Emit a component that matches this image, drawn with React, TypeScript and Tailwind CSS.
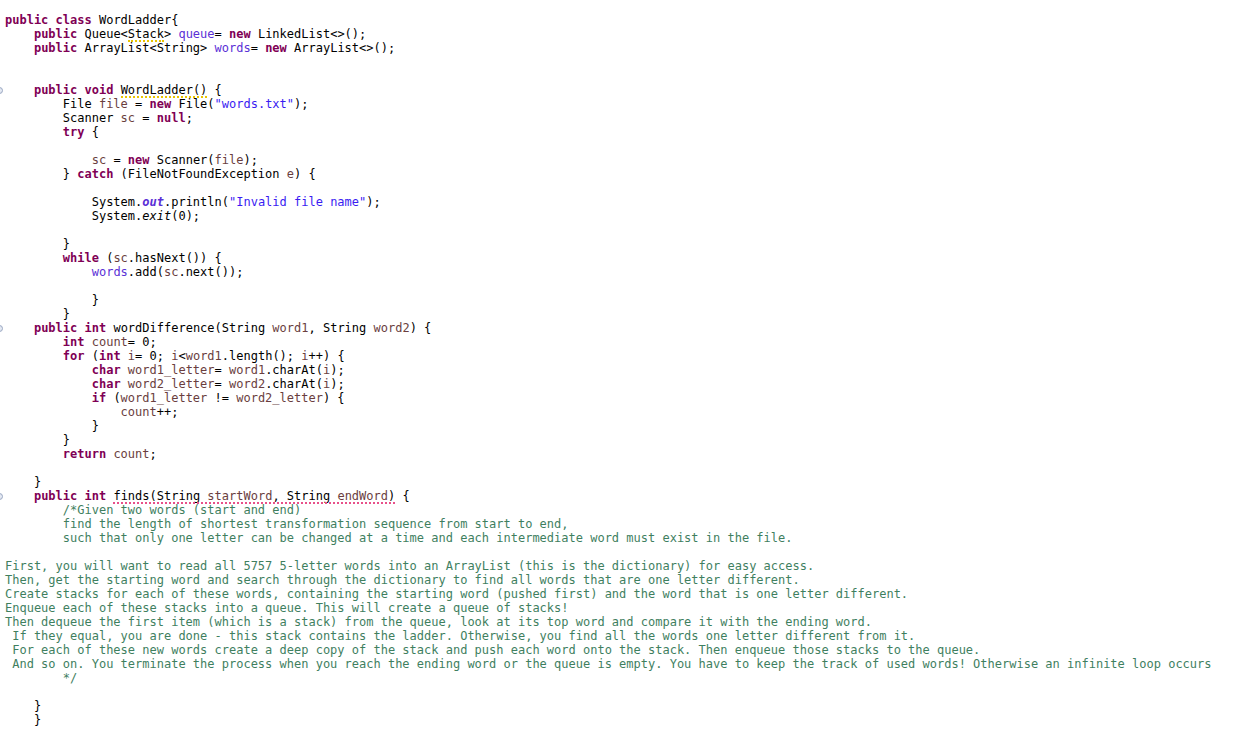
import React, {JSX} from 'react';

type Seg = [string, string?];

const K = "font-bold text-[#7f0055]";
const F = "text-[#5b30d6]";
const S = "text-[#3a1cf2]";
const V = "text-[#6a3e3e]";
const C = "text-[#3f7f5f]";
const SF = "font-bold italic text-[#5b30d6]";
const SM = "italic";

const T1 = "    ";
const T2 = "        ";
const T3 = "            ";
const T4 = "                ";

interface CodeLine {
    segs: Seg[];
    marker?: boolean;
}

function Warn({children, error}: {children: React.ReactNode; error?: boolean}): JSX.Element {
    return (
        <span className="relative">
            {children}
            <span
                className={`absolute left-0 right-0 bottom-[-1px] h-[2px] border-b-2 border-dotted ${error ? "border-[#e8508a]" : "border-[#e9c400]"}`}/>
        </span>
    );
}

const lines: CodeLine[] = [
    {segs: [["public", K], [" "], ["class", K], [" WordLadder{"]]},
    {segs: [[T1], ["public", K], [" Queue<"], ["@warn:Stack"], ["> "], ["queue", F], ["= "], ["new", K], [" LinkedList<>();"]]},
    {segs: [[T1], ["public", K], [" ArrayList<String> "], ["words", F], ["= "], ["new", K], [" ArrayList<>();"]]},
    {segs: []},
    {segs: []},
    {marker: true, segs: [[T1], ["public", K], [" "], ["void", K], [" "], ["@warn:WordLadder()"], [" {"]]},
    {segs: [[T2 + "File "], ["file", V], [" = "], ["new", K], [" File("], ["\"words.txt\"", S], [");"]]},
    {segs: [[T2 + "Scanner "], ["sc", V], [" = "], ["null", K], [";"]]},
    {segs: [[T2], ["try", K], [" {"]]},
    {segs: []},
    {segs: [[T3], ["sc", V], [" = "], ["new", K], [" Scanner("], ["file", V], [");"]]},
    {segs: [[T2 + "} "], ["catch", K], [" (FileNotFoundException "], ["e", V], [") {"]]},
    {segs: []},
    {segs: [[T3 + "System."], ["out", SF], [".println("], ["\"Invalid file name\"", S], [");"]]},
    {segs: [[T3 + "System."], ["exit", SM], ["(0);"]]},
    {segs: []},
    {segs: [[T2 + "}"]]},
    {segs: [[T2], ["while", K], [" ("], ["sc", V], [".hasNext()) {"]]},
    {segs: [[T3], ["words", F], [".add("], ["sc", V], [".next());"]]},
    {segs: []},
    {segs: [[T3 + "}"]]},
    {segs: [[T2 + "}"]]},
    {marker: true, segs: [[T1], ["public", K], [" "], ["int", K], [" wordDifference(String "], ["word1", V], [", String "], ["word2", V], [") {"]]},
    {segs: [[T2], ["int", K], [" "], ["count", V], ["= 0;"]]},
    {segs: [[T2], ["for", K], [" ("], ["int", K], [" "], ["i", V], ["= 0; "], ["i", V], ["<"], ["word1", V], [".length(); "], ["i", V], ["++) {"]]},
    {segs: [[T3], ["char", K], [" "], ["word1_letter", V], ["= "], ["word1", V], [".charAt("], ["i", V], [");"]]},
    {segs: [[T3], ["char", K], [" "], ["word2_letter", V], ["= "], ["word2", V], [".charAt("], ["i", V], [");"]]},
    {segs: [[T3], ["if", K], [" ("], ["word1_letter", V], [" != "], ["word2_letter", V], [") {"]]},
    {segs: [[T4], ["count", V], ["++;"]]},
    {segs: [[T3 + "}"]]},
    {segs: [[T2 + "}"]]},
    {segs: [[T2], ["return", K], [" "], ["count", V], [";"]]},
    {segs: []},
    {segs: [[T1 + "}"]]},
    {marker: true, segs: [[T1], ["public", K], [" "], ["int", K], [" "], ["@err"], [" {"]]},
    {segs: [[T2 + "/*Given two words (start and end)", C]]},
    {segs: [[T2 + "find the length of shortest transformation sequence from start to end,", C]]},
    {segs: [[T2 + "such that only one letter can be changed at a time and each intermediate word must exist in the file.", C]]},
    {segs: []},
    {segs: [["First, you will want to read all 5757 5-letter words into an ArrayList (this is the dictionary) for easy access.", C]]},
    {segs: [["Then, get the starting word and search through the dictionary to find all words that are one letter different.", C]]},
    {segs: [["Create stacks for each of these words, containing the starting word (pushed first) and the word that is one letter different.", C]]},
    {segs: [["Enqueue each of these stacks into a queue. This will create a queue of stacks!", C]]},
    {segs: [["Then dequeue the first item (which is a stack) from the queue, look at its top word and compare it with the ending word.", C]]},
    {segs: [[" If they equal, you are done - this stack contains the ladder. Otherwise, you find all the words one letter different from it.", C]]},
    {segs: [[" For each of these new words create a deep copy of the stack and push each word onto the stack. Then enqueue those stacks to the queue.", C]]},
    {segs: [[" And so on. You terminate the process when you reach the ending word or the queue is empty. You have to keep the track of used words! Otherwise an infinite loop occurs", C]]},
    {segs: [[T2 + "*/", C]]},
    {segs: []},
    {segs: [[T1 + "}"]]},
    {segs: [[T1 + "}"]]},
];

function renderSeg([text, cls]: Seg, i: number): JSX.Element {
    if (text.startsWith("@warn:")) {
        return <Warn key={i}>{text.slice(6)}</Warn>;
    }
    if (text === "@err") {
        return (
            <Warn key={i} error>
                finds(String <span className={V}>startWord</span>, String <span className={V}>endWord</span>)
            </Warn>
        );
    }
    return <span key={i} className={cls}>{text}</span>;
}

export default function App(): JSX.Element {
    return (
        <div className="w-[1251px] h-[745px] bg-white overflow-hidden pt-[13px]">
            <div className="flex flex-col font-['DejaVu_Sans_Mono',monospace] text-[12px] leading-[14px] text-black">
                {lines.map((line, i) => (
                    <div key={i} className="flex h-[14px]">
                        <div className="w-[5px] shrink-0 flex items-center overflow-hidden">
                            {line.marker && (
                                <div className="w-[7px] h-[7px] -ml-[4px] rounded-full border border-[#9aa7c2] bg-[#e4e9f3]"/>
                            )}
                        </div>
                        <pre className="font-['DejaVu_Sans_Mono',monospace] whitespace-pre">
                            {line.segs.map(renderSeg)}
                        </pre>
                    </div>
                ))}
            </div>
        </div>
    );
}
